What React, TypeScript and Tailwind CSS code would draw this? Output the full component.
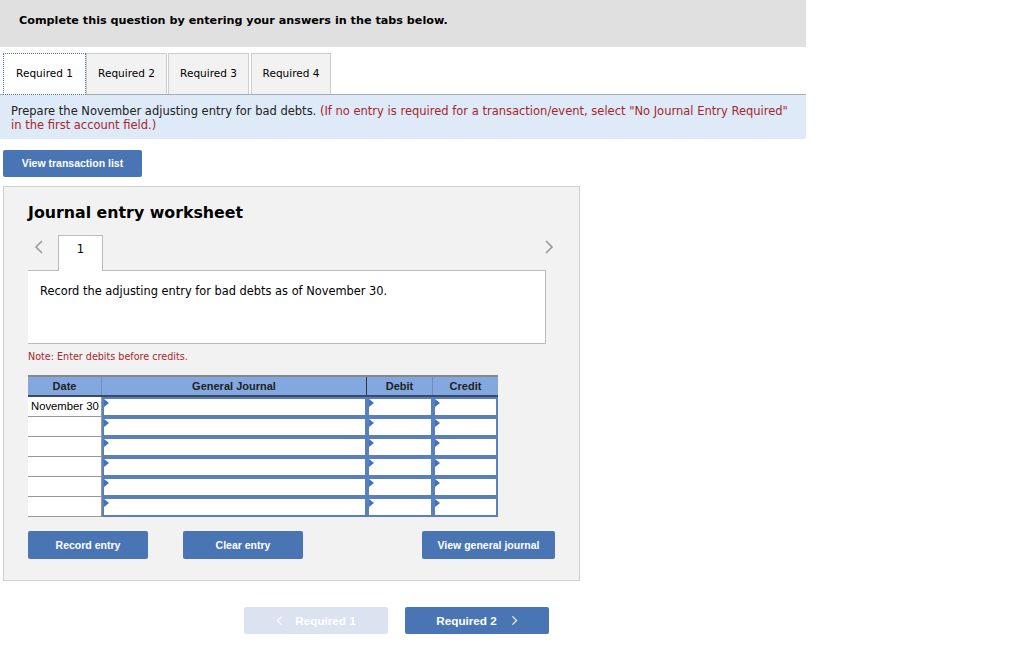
import React from "react";

const verdana = { fontFamily: '"DejaVu Sans", Verdana, sans-serif' };
const arial = { fontFamily: '"Liberation Sans", Arial, sans-serif' };

function Chevron({ dir, className }: { dir: "left" | "right"; className?: string }) {
  return (
    <svg width="10" height="16" viewBox="0 0 10 16" className={className}>
      <polyline
        points={dir === "left" ? "8,2 2,8 8,14" : "2,2 8,8 2,14"}
        fill="none"
        stroke="currentColor"
        strokeWidth="1.6"
      />
    </svg>
  );
}

function InputCell({ w }: { w: string }) {
  return (
    <div className={`relative h-[20px] ${w} border-2 border-[#5a7fbd] bg-white`}>
      <div className="absolute left-0 top-0 w-0 h-0 border-t-[4px] border-b-[4px] border-l-[5px] border-t-transparent border-b-transparent border-l-[#3f72c4]" />
    </div>
  );
}

export default function App() {
  const rows = [0, 1, 2, 3, 4, 5];
  return (
    <div className="w-[1024px] h-[669px] bg-white" style={verdana}>
      <div className="w-[806px]">
        <div className="h-[47px] bg-[#e0e0e0] pl-[19px] pt-[13px] text-[11.2px] font-bold text-black">
          Complete this question by entering your answers in the tabs below.
        </div>
        <div className="mt-[6px] flex items-end pl-[3px] border-b border-[#aaa] text-[10.5px] text-black">
          <div className="h-[42px] w-[83px] flex items-center justify-center bg-white border border-dotted border-[#4d6fc2] -mb-px">
            Required 1
          </div>
          <div className="h-[41px] w-[81px] flex items-center justify-center bg-[#f2f2f2] border border-[#ccc] border-b-0 ml-0">
            Required 2
          </div>
          <div className="h-[41px] w-[81px] flex items-center justify-center bg-[#f2f2f2] border border-[#ccc] border-b-0 ml-[1px]">
            Required 3
          </div>
          <div className="h-[41px] w-[80px] flex items-center justify-center bg-[#f2f2f2] border border-[#ccc] border-b-0 ml-[2px]">
            Required 4
          </div>
        </div>
        <div className="bg-[#deeaf7] px-[11px] pt-[9px] pb-[7px] text-[11.5px] leading-[14px] text-[#222]">
          Prepare the November adjusting entry for bad debts.{" "}
          <span className="text-[#a8262b]">
            (If no entry is required for a transaction/event, select "No Journal Entry Required"
            <br />
            in the first account field.)
          </span>
        </div>
      </div>

      <button
        className="mt-[11px] ml-[3px] h-[27px] w-[139px] rounded-[2px] bg-[#4a75b4] text-white text-[10.5px] font-bold flex items-center justify-center"
        style={arial}
      >
        View transaction list
      </button>

      <div className="mt-[9px] ml-[3px] w-[577px] h-[395px] bg-[#f2f2f2] border border-[#d0d0d0] pl-[24px] pt-[16px]">
        <div className="text-[15.8px] font-bold text-black leading-[20px]">Journal entry worksheet</div>
        <div className="mt-[12px] flex items-start w-[518px]">
          <Chevron dir="left" className="text-[#999] mt-[4px] ml-[6px]" />
          <div className="ml-[14px] h-[36px] w-[45px] bg-white border border-[#bbb] border-b-0 flex items-start justify-center pt-[5px] text-[11.5px] text-black -mb-px relative z-10">
            1
          </div>
          <div className="flex-1" />
          <Chevron dir="right" className="text-[#999] mt-[4px] -mr-[8px]" />
        </div>
        <div className="w-[518px] h-[74px] bg-white border border-[#bbb] border-l-0 pl-[12px] pt-[12px] text-[11.4px] text-black">
          Record the adjusting entry for bad debts as of November 30.
        </div>
        <div className="mt-[6px] text-[9.6px] text-[#a8262b]">Note: Enter debits before credits.</div>

        <div className="mt-[11px] w-[470px] border-t-2 border-[#888] text-[11px]" style={arial}>
          <div className="flex h-[20px] bg-[#82a8df] font-bold text-[#222] border-b-2 border-[#3a4a66]">
            <div className="w-[74px] flex items-center justify-center border-r border-[#6f8fc0]">Date</div>
            <div className="w-[265px] flex items-center justify-center border-r border-[#333]">General Journal</div>
            <div className="w-[66px] flex items-center justify-center border-r border-[#6f8fc0]">Debit</div>
            <div className="w-[65px] flex items-center justify-center">Credit</div>
          </div>
          {rows.map((r) => (
            <div key={r} className="flex h-[20px]">
              <div className="w-[74px] bg-white border-b border-[#999] border-r flex items-center pl-[3px] text-[11.3px] text-black whitespace-nowrap overflow-hidden">
                {r === 0 ? "November 30" : ""}
              </div>
              <InputCell w="w-[265px]" />
              <InputCell w="w-[66px]" />
              <InputCell w="w-[65px]" />
            </div>
          ))}
        </div>

        <div className="mt-[14px] flex w-[527px] text-[10.5px] font-bold text-white" style={arial}>
          <button className="h-[28px] w-[120px] rounded-[2px] bg-[#4a75b4]">Record entry</button>
          <button className="ml-[35px] h-[28px] w-[120px] rounded-[2px] bg-[#4a75b4]">Clear entry</button>
          <div className="flex-1" />
          <button className="h-[28px] w-[133px] rounded-[2px] bg-[#4a75b4]">View general journal</button>
        </div>
      </div>

      <div className="mt-[26px] ml-[244px] flex gap-[17px] text-[11.7px] font-bold text-white" style={arial}>
        <div className="h-[27px] w-[144px] rounded-[2px] bg-[#dae3ef] flex items-center justify-center gap-[12px]">
          <Chevron dir="left" className="w-[7px] h-[11px]" />
          <span>Required 1</span>
        </div>
        <div className="h-[27px] w-[144px] rounded-[2px] bg-[#4a75b4] flex items-center justify-center gap-[14px]">
          <span>Required 2</span>
          <Chevron dir="right" className="w-[7px] h-[11px]" />
        </div>
      </div>
    </div>
  );
}
